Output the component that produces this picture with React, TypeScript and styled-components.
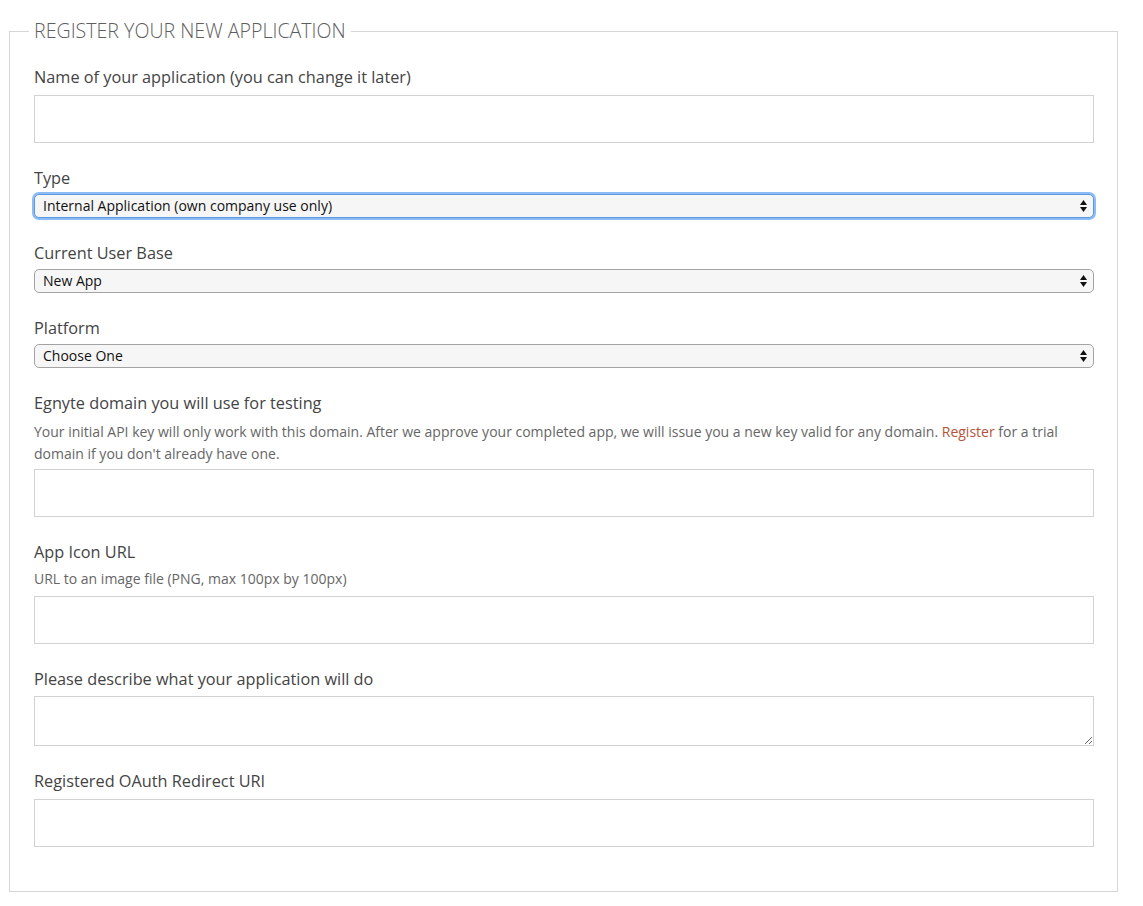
import styled, { createGlobalStyle } from 'styled-components';

const GlobalStyle = createGlobalStyle`
  body {
    margin: 0;
    background: #fff;
    font-family: "Open Sans", "Noto Sans", sans-serif;
    color: #444;
  }
`;

const Page = styled.div`
  padding: 18px 25px 15px 9px;
`;

const Fieldset = styled.fieldset`
  margin: 0;
  border: 1px solid #d6d6d6;
  padding: 22px 23px 44px 24px;
  min-width: 0;
`;

const Legend = styled.legend`
  font-family: "Open Sans", sans-serif;
  font-weight: 300;
  font-size: 19.6px;
  line-height: 26px;
  color: #5e5e5e;
  text-transform: uppercase;
  padding: 0 5px;
  margin-left: -5px;
`;

const Field = styled.div`
  display: flex;
  flex-direction: column;
  & + & {
    margin-top: 24px;
  }
`;

const Label = styled.label<{ $gap?: number }>`
  font-size: 16.3px;
  line-height: 22px;
  color: #444;
  margin-bottom: ${p => p.$gap ?? 7}px;
`;

const Help = styled.p<{ $gap?: number }>`
  margin: 0 0 ${p => p.$gap ?? 4}px;
  font-size: 14px;
  line-height: 22px;
  color: #666;

  a {
    color: #b5533b;
    text-decoration: none;
  }
`;

const TextInput = styled.input`
  box-sizing: border-box;
  height: 48px;
  width: 100%;
  border: 1px solid #d2d2d2;
  border-radius: 0;
  background: #fff;
  padding: 0 10px;
  font: 16px "Open Sans", sans-serif;
  outline: none;
`;

const TextArea = styled.textarea`
  box-sizing: border-box;
  height: 50px;
  width: 100%;
  border: 1px solid #d2d2d2;
  border-radius: 0;
  background: #fff;
  padding: 6px 10px;
  font: 16px "Open Sans", sans-serif;
  outline: none;
  display: block;
`;

const SelectWrap = styled.div`
  position: relative;
  height: 24px;
`;

const Select = styled.select<{ $focused?: boolean }>`
  appearance: none;
  -webkit-appearance: none;
  box-sizing: border-box;
  width: 100%;
  height: 24px;
  border: 1px solid ${p => (p.$focused ? '#5a9be0' : '#a3a3a3')};
  border-radius: 5px;
  background: #f6f6f6;
  padding: 0 24px 1px 8px;
  font: 14px "Open Sans", sans-serif;
  color: #111;
  outline: none;
  box-shadow: ${p => (p.$focused ? '0 0 0 2px rgba(80, 150, 240, 0.65)' : 'none')};
`;

const Arrows = styled.svg`
  position: absolute;
  right: 7px;
  top: 6px;
  pointer-events: none;
`;

const Stepper = () => (
  <Arrows width="7" height="12" viewBox="0 0 7 12">
    <path d="M3.5 0 L7 5 L0 5 Z" fill="#111" />
    <path d="M0 7 L7 7 L3.5 12 Z" fill="#111" />
  </Arrows>
);

const SelectField = ({ label, value, focused }: { label: string; value: string; focused?: boolean }) => (
  <Field>
    <Label $gap={5}>{label}</Label>
    <SelectWrap>
      <Select $focused={focused} defaultValue={value}>
        <option>{value}</option>
      </Select>
      <Stepper />
    </SelectWrap>
  </Field>
);

export default function App() {
  return (
    <>
      <GlobalStyle />
      <Page>
        <Fieldset>
          <Legend>Register your new application</Legend>

          <Field>
            <Label>Name of your application (you can change it later)</Label>
            <TextInput type="text" />
          </Field>

          <SelectField label="Type" value="Internal Application (own company use only)" focused />
          <SelectField label="Current User Base" value="New App" />
          <SelectField label="Platform" value="Choose One" />

          <Field>
            <Label $gap={7}>Egnyte domain you will use for testing</Label>
            <Help>
              Your initial API key will only work with this domain. After we approve your completed app, we will
              issue you a new key valid for any domain. <a href="#">Register</a> for a trial domain if you don't
              already have one.
            </Help>
            <TextInput type="text" />
          </Field>

          <Field>
            <Label $gap={5}>App Icon URL</Label>
            <Help $gap={6}>URL to an image file (PNG, max 100px by 100px)</Help>
            <TextInput type="text" />
          </Field>

          <Field>
            <Label $gap={6}>Please describe what your application will do</Label>
            <TextArea />
          </Field>

          <Field>
            <Label>Registered OAuth Redirect URI</Label>
            <TextInput type="text" />
          </Field>
        </Fieldset>
      </Page>
    </>
  );
}
